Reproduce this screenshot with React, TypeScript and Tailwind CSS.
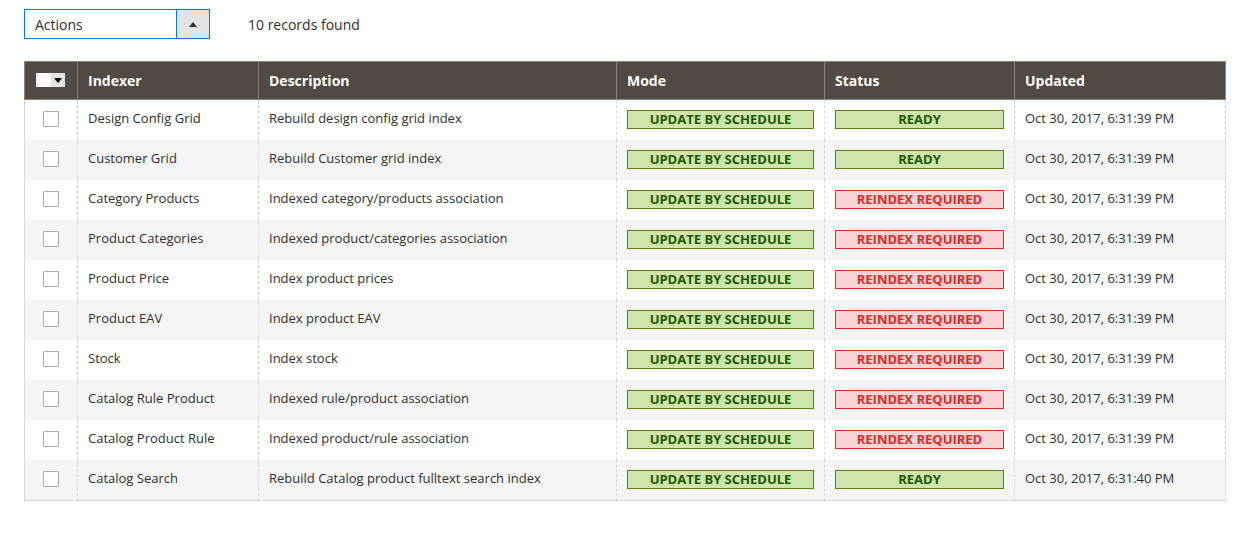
import React from 'react'

type Row = { name: string; desc: string; ready: boolean; updated: string }

const rows: Row[] = [
  { name: 'Design Config Grid', desc: 'Rebuild design config grid index', ready: true, updated: 'Oct 30, 2017, 6:31:39 PM' },
  { name: 'Customer Grid', desc: 'Rebuild Customer grid index', ready: true, updated: 'Oct 30, 2017, 6:31:39 PM' },
  { name: 'Category Products', desc: 'Indexed category/products association', ready: false, updated: 'Oct 30, 2017, 6:31:39 PM' },
  { name: 'Product Categories', desc: 'Indexed product/categories association', ready: false, updated: 'Oct 30, 2017, 6:31:39 PM' },
  { name: 'Product Price', desc: 'Index product prices', ready: false, updated: 'Oct 30, 2017, 6:31:39 PM' },
  { name: 'Product EAV', desc: 'Index product EAV', ready: false, updated: 'Oct 30, 2017, 6:31:39 PM' },
  { name: 'Stock', desc: 'Index stock', ready: false, updated: 'Oct 30, 2017, 6:31:39 PM' },
  { name: 'Catalog Rule Product', desc: 'Indexed rule/product association', ready: false, updated: 'Oct 30, 2017, 6:31:39 PM' },
  { name: 'Catalog Product Rule', desc: 'Indexed product/rule association', ready: false, updated: 'Oct 30, 2017, 6:31:39 PM' },
  { name: 'Catalog Search', desc: 'Rebuild Catalog product fulltext search index', ready: true, updated: 'Oct 30, 2017, 6:31:40 PM' },
]

const th =
  'text-left font-bold text-[14px] text-white px-[10px] pb-[1px] border-y border-l border-[#8a837f] last:border-r'
const td =
  'px-[10px] pb-[2px] border-l border-dashed border-[#d6d6d6] first:border-solid last:border-r'

const badge = 'h-[19px] border font-bold text-center leading-[17px] text-[13px]'

export default function App() {
  return (
    <div className="w-[1242px] h-[534px] bg-white text-[#303030] font-['Open_Sans',sans-serif] pt-[9px] px-[24px]">
      {/* toolbar */}
      <div className="flex items-center h-[30px]">
        <div className="flex w-[186px] h-[30px] border border-[#007bdb]">
          <div className="flex-1 flex items-center pl-[10px] text-[14px]">Actions</div>
          <div className="w-[33px] bg-[#e3e3e3] border-l border-[#007bdb] flex items-center justify-center">
            <span className="w-0 h-0 border-l-[4px] border-r-[4px] border-b-[5px] border-l-transparent border-r-transparent border-b-[#303030]" />
          </div>
        </div>
        <span className="ml-[38px] text-[14px]">10 records found</span>
      </div>

      {/* grid */}
      <table className="mt-[22px] w-[1202px] border-separate border-spacing-0 table-fixed">
        <colgroup>
          <col className="w-[53px]" />
          <col className="w-[181px]" />
          <col className="w-[358px]" />
          <col className="w-[208px]" />
          <col className="w-[190px]" />
          <col className="w-[212px]" />
        </colgroup>
        <thead className="bg-[#514943]">
          <tr className="h-[39px]">
            <th className={th}>
              <div className="flex ml-[1px]">
                <span className="w-[15px] h-[14px] bg-white" />
                <span className="w-[14px] h-[14px] bg-[#e3e3e3] flex items-center justify-center">
                  <span className="w-0 h-0 border-l-[4px] border-r-[4px] border-t-[5px] border-l-transparent border-r-transparent border-t-black" />
                </span>
              </div>
            </th>
            <th className={th}>Indexer</th>
            <th className={th}>Description</th>
            <th className={th}>Mode</th>
            <th className={th}>Status</th>
            <th className={th}>Updated</th>
          </tr>
        </thead>
        <tbody className="text-[13px]">
          {rows.map((r, i) => {
            const last = i === rows.length - 1
            const cell = `${td} ${last ? 'h-[41px] border-b border-b-[#d6d6d6] [border-bottom-style:solid]' : 'h-[40px]'}`
            return (
              <tr key={r.name} className={i % 2 ? 'bg-[#f5f5f5]' : 'bg-white'}>
                <td className={cell}>
                  <div className="ml-[8px] w-[16px] h-[16px] border border-[#adadad] rounded-[1px] bg-white" />
                </td>
                <td className={cell}>{r.name}</td>
                <td className={cell}>{r.desc}</td>
                <td className={cell}>
                  <div className={`${badge} border-[#5b8116] bg-[#d0e5a9] text-[#185b00]`}>UPDATE BY SCHEDULE</div>
                </td>
                <td className={cell}>
                  {r.ready ? (
                    <div className={`${badge} border-[#5b8116] bg-[#d0e5a9] text-[#185b00]`}>READY</div>
                  ) : (
                    <div className={`${badge} border-[#e22626] bg-[#f9d4d4] text-[#e22626]`}>REINDEX REQUIRED</div>
                  )}
                </td>
                <td className={`${cell} [border-right-style:solid]`}>{r.updated}</td>
              </tr>
            )
          })}
        </tbody>
      </table>
    </div>
  )
}
